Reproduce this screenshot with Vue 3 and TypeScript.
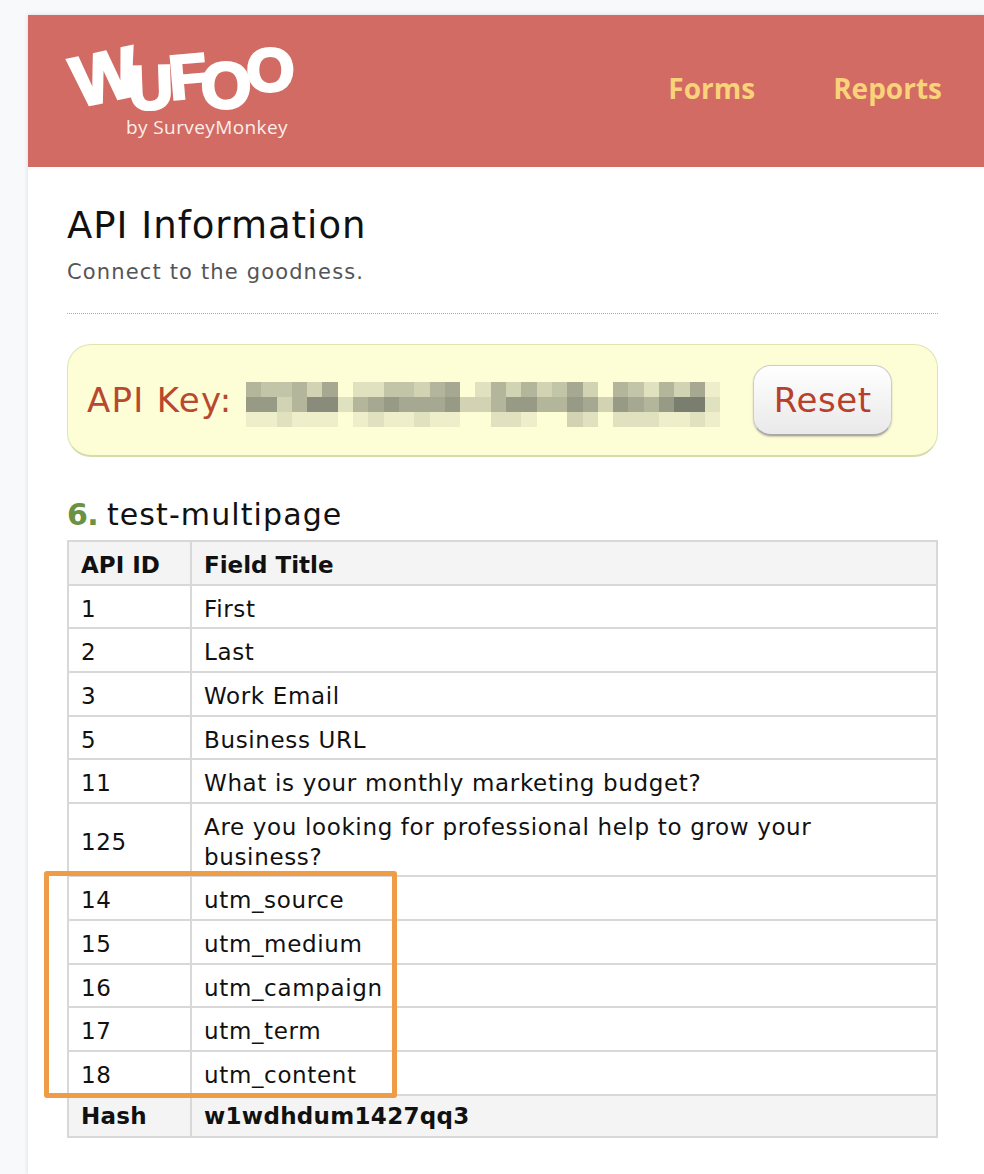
<script setup lang="ts">
const rows = [
  { id: '1', title: 'First' },
  { id: '2', title: 'Last' },
  { id: '3', title: 'Work Email' },
  { id: '5', title: 'Business URL' },
  { id: '11', title: 'What is your monthly marketing budget?' },
  { id: '125', title: 'Are you looking for professional help to grow your business?' },
  { id: '14', title: 'utm_source' },
  { id: '15', title: 'utm_medium' },
  { id: '16', title: 'utm_campaign' },
  { id: '17', title: 'utm_term' },
  { id: '18', title: 'utm_content' },
]
const pixels = [
  '5445360224' + '4356025353' + '46305425361',
  '7735882567' + '6667335775' + '57637657992',
  '1121110121' + '1211002210' + '03202221121',
]
const shade = (n: string) => {
  const t = Number(n) / 9
  const a = [253, 253, 214]
  const b = [122, 126, 110]
  return `rgb(${a.map((v, i) => Math.round(v + (b[i] - v) * t)).join(',')})`
}
</script>

<template>
  <div class="page">
    <div class="sheet">
      <header class="head">
        <div class="logo">
          <div class="word">
            <span class="l w">W</span><span class="l u">U</span><span class="l f">F</span><span class="l o1">O</span><span class="l o2">O</span>
          </div>
          <div class="by">by SurveyMonkey</div>
        </div>
        <nav class="nav"><a>Forms</a><a>Reports</a></nav>
      </header>
      <main class="body">
        <h1>API Information</h1>
        <p class="sub">Connect to the goodness.</p>
        <div class="rule"></div>
        <div class="key">
          <span class="label">API Key:</span>
          <div class="blur">
            <div v-for="(r, i) in pixels" :key="i" class="row">
              <i v-for="(c, j) in r" :key="j" :style="{ background: shade(c) }"></i>
            </div>
          </div>
          <button class="reset">Reset</button>
        </div>
        <h2><b>6.</b> test-multipage</h2>
        <div class="table-wrap">
          <table>
            <thead><tr><th class="c1">API ID</th><th>Field Title</th></tr></thead>
            <tbody>
              <tr v-for="r in rows" :key="r.id"><td class="c1">{{ r.id }}</td><td>{{ r.title }}</td></tr>
            </tbody>
            <tfoot><tr><th class="c1">Hash</th><th>w1wdhdum1427qq3</th></tr></tfoot>
          </table>
          <div class="mark"></div>
        </div>
      </main>
    </div>
  </div>
</template>

<style>
html, body { margin: 0; background: #f8f9fb; }
</style>

<style scoped>
.page { height: 1174px; overflow: hidden; padding: 15px 0 0 28px; box-sizing: border-box; font-family: "DejaVu Sans", sans-serif; }
.sheet { background: #fff; height: 1159px; box-shadow: 0 0 4px rgba(60, 70, 90, .18); }
.head { height: 152px; background: #d26b63; display: flex; justify-content: space-between; box-sizing: border-box; padding: 30px 42px 0 44px; }
.logo { width: 226px; }
.word { display: flex; height: 65px; font-family: "Liberation Sans", sans-serif; font-weight: 700; color: #fff; line-height: .8; }
.l { display: inline-block; -webkit-text-stroke: 3px #fff; }
.w { font-size: 70px; transform: rotate(-12deg) translateY(4px); margin-right: -10px; }
.u { font-size: 62px; transform: rotate(-2deg) translateY(18px); margin-right: -4px; }
.f { font-size: 62px; transform: rotate(-5deg) translateY(7px); margin-right: -6px; }
.o1 { font-size: 65px; transform: translateY(14.5px); margin-right: -5px; }
.o2 { font-size: 62px; }
.by { color: #fbeeea; font-family: "Open Sans", sans-serif; font-size: 19px; font-weight: 500; letter-spacing: .4px; margin: 4px 0 0 54px; white-space: nowrap; }
.nav { display: flex; gap: 78px; padding-top: 26px; }
.nav a { font-family: "Open Sans", sans-serif; font-weight: 700; font-size: 28px; line-height: 34px; color: #f9d27a; }
.body { padding: 35px 46px 0 39px; }
h1 { margin: 0; font-size: 37px; font-weight: 400; letter-spacing: 1px; line-height: 48px; color: #111; }
.sub { margin: 7px 0 0; font-size: 21px; letter-spacing: 1.15px; line-height: 30px; color: #555; }
.rule { margin-top: 26px; border-top: 1px dotted #aaa; }
.key { margin-top: 30px; height: 113px; box-sizing: border-box; border: 1px solid #dfe5b0; border-bottom: 2px solid #d6dba8; border-radius: 24px; background: #fdfdd6; display: flex; align-items: center; padding-left: 19px; }
.label { font-size: 34px; letter-spacing: 1.3px; color: #b8482e; width: 159px; white-space: nowrap; }
.blur { display: flex; flex-direction: column; filter: blur(.4px); margin-top: 8px; }
.row { display: flex; }
.row i { display: block; width: 15.3px; height: 15px; }
.reset { margin-left: 33px; width: 139px; height: 71px; border: 1px solid #ccc; border-bottom: 2px solid #aaa; border-radius: 18px; background: linear-gradient(#fff, #e9e9e9); color: #b8402a; font: 34px "DejaVu Sans", sans-serif; letter-spacing: .6px; padding: 0; box-shadow: 0 1px 2px rgba(0,0,0,.2); }
h2 { margin: 38px 0 0; font-size: 30px; font-weight: 400; letter-spacing: 1.1px; line-height: 40px; color: #111; }
h2 b { color: #6c9140; letter-spacing: -.5px; margin-right: -2px; }
.table-wrap { position: relative; margin-top: 5px; }
table { width: 100%; border-collapse: collapse; border: 2px solid #c4c4c4; font-size: 23px; color: #111; }
th, td { border: 2px solid #d8d8d8; padding: 8px 12px 3.65px 12px; text-align: left; line-height: 30px; font-weight: 400; }
td { letter-spacing: .65px; }
th { background: #f4f4f4; font-weight: 700; }
tfoot th { padding: 5px 12px; letter-spacing: .3px; }
.c1 { width: 97px; }
.mark { position: absolute; left: -23.5px; top: 331px; width: 343.5px; height: 217px; border: 5px solid #ee9c45; border-radius: 3px; }
</style>
